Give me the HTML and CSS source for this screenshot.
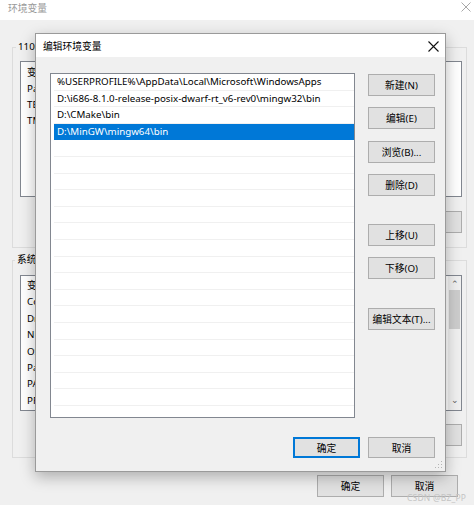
FILE: index.html
```html
<!DOCTYPE html>
<html lang="zh-CN">
<head>
<meta charset="utf-8">
<title>编辑环境变量</title>
<link rel="stylesheet" href="styles.css">
</head>
<body>
<div class="bgwin">
  <div class="bg-title">
    <span class="bg-title-text">环境变量</span>
    <svg class="bg-close" width="10" height="10" viewBox="0 0 10 10"><path d="M0.5 0.5 L9.5 9.5 M9.5 0.5 L0.5 9.5" stroke="#a8a8a8" stroke-width="1" fill="none"/></svg>
  </div>
  <div class="bg-body">
    <div class="group g1">
      <div class="legend">1100</div>
      <div class="bg-list">
        <div class="bg-row">变量</div>
        <div class="bg-row">Path</div>
        <div class="bg-row">TEMP</div>
        <div class="bg-row">TMP</div>
      </div>
      <div class="bg-btns">
        <button class="btn bg-btn">新建(N)...</button>
        <button class="btn bg-btn">编辑(E)...</button>
        <button class="btn bg-btn">删除(D)</button>
      </div>
    </div>
    <div class="group g2">
      <div class="legend">系统</div>
      <div class="bg-list scroll">
        <div class="bg-rows">
          <div class="bg-row">变量</div>
          <div class="bg-row">ComSpec</div>
          <div class="bg-row">DriverData</div>
          <div class="bg-row">NUMBER_OF_PROCESSORS</div>
          <div class="bg-row">OS</div>
          <div class="bg-row">Path</div>
          <div class="bg-row">PATHEXT</div>
          <div class="bg-row">PROCESSOR_ARCHITECTURE</div>
        </div>
        <div class="vscroll">
          <span class="arrow">&#8963;</span>
          <div class="thumb"></div>
          <span class="arrow down">&#8964;</span>
        </div>
      </div>
      <div class="bg-btns">
        <button class="btn bg-btn">新建(W)...</button>
        <button class="btn bg-btn">编辑(I)...</button>
        <button class="btn bg-btn">删除(L)</button>
      </div>
    </div>
    <div class="bg-foot">
      <button class="btn bg-btn">确定</button>
      <button class="btn bg-btn">取消</button>
    </div>
  </div>
</div>

<div class="dialog">
  <div class="dlg-title">
    <span class="dlg-title-text">编辑环境变量</span>
    <svg class="dlg-close" width="11" height="11" viewBox="0 0 11 11"><path d="M0.5 0.5 L10.5 10.5 M10.5 0.5 L0.5 10.5" stroke="#111" stroke-width="1.1" fill="none"/></svg>
  </div>
  <div class="dlg-body">
    <div class="dlg-main">
      <div class="path-list">
        <div class="prow">%USERPROFILE%\AppData\Local\Microsoft\WindowsApps</div>
        <div class="prow">D:\i686-8.1.0-release-posix-dwarf-rt_v6-rev0\mingw32\bin</div>
        <div class="prow">D:\CMake\bin</div>
        <div class="prow sel">D:\MinGW\mingw64\bin</div>
        <div class="prow"></div><div class="prow"></div><div class="prow"></div><div class="prow"></div>
        <div class="prow"></div><div class="prow"></div><div class="prow"></div><div class="prow"></div>
        <div class="prow"></div><div class="prow"></div><div class="prow"></div><div class="prow"></div>
        <div class="prow"></div><div class="prow"></div><div class="prow"></div><div class="prow"></div>
      </div>
      <div class="side-btns">
        <button class="btn side">新建(N)</button>
        <button class="btn side">编辑(E)</button>
        <button class="btn side">浏览(B)...</button>
        <button class="btn side">删除(D)</button>
        <button class="btn side spaced">上移(U)</button>
        <button class="btn side">下移(O)</button>
        <button class="btn side spaced">编辑文本(T)...</button>
      </div>
    </div>
    <div class="dlg-foot">
      <button class="btn foot default">确定</button>
      <button class="btn foot">取消</button>
    </div>
    <svg class="grip" width="8" height="8" viewBox="0 0 8 8">
      <rect x="6" y="0" width="1" height="1" fill="#b4b4b4"/>
      <rect x="3" y="3" width="1" height="1" fill="#b4b4b4"/>
      <rect x="6" y="3" width="1" height="1" fill="#b4b4b4"/>
      <rect x="0" y="6" width="1" height="1" fill="#b4b4b4"/>
      <rect x="3" y="6" width="1" height="1" fill="#b4b4b4"/>
      <rect x="6" y="6" width="1" height="1" fill="#b4b4b4"/>
    </svg>
  </div>
</div>

<div class="watermark">CSDN @BZ_PP</div>
</body>
</html>
```

FILE: styles.css
```css
* { box-sizing: border-box; }
html, body { margin: 0; padding: 0; }
body {
  width: 474px;
  height: 509px;
  overflow: hidden;
  position: relative;
  background: #ffffff;
  font-family: "Noto Sans", "Noto Sans CJK SC", sans-serif;
  font-size: 9.75px;
  color: #000;
}

/* ---------- background window ---------- */
.bgwin {
  width: 474px;
  height: 505px;
  background: #f0f0f0;
  display: flex;
  flex-direction: column;
}
.bg-title {
  height: 20px;
  background: #fff;
  display: flex;
  align-items: center;
  justify-content: space-between;
  padding: 0 3px 4px 8px;
  color: #9a9a9a;
}
.bg-close { display: block; margin-top: -3px; }
.bg-body {
  padding: 0 7px 0 12px;
  display: flex;
  flex-direction: column;
}
.group {
  border: 1px solid #dcdcdc;
  padding: 0 4px 0 7px;
}
.g1 { margin-top: 27px; padding-bottom: 14px; }
.g2 { margin-top: 12px; padding-bottom: 11px; }
.legend {
  margin: -9px 0 0 -4px;
  padding: 0 2px;
  width: max-content;
  white-space: nowrap;
  height: 16px;
  line-height: 16px;
  background: #f0f0f0;
}
.g2 .legend { margin-left: -5px; }
.bg-list {
  background: #fff;
  border: 1px solid #828790;
  height: 136px;
  padding: 3px 0 0 6px;
}
.g1 .bg-list { margin-top: 6px; }
.g2 .bg-list { margin-top: 7px; display: flex; padding: 0 0 0 6px; }
.bg-rows { flex: 1; padding-top: 2px; }
.bg-row { height: 16px; line-height: 16px; white-space: nowrap; }
.g2 .bg-row { height: 16.4px; line-height: 16.4px; }
.vscroll {
  width: 13px;
  background: #f0f0f0;
  display: flex;
  flex-direction: column;
  align-items: center;
  color: #606060;
  font-size: 9px;
}
.arrow { height: 14px; line-height: 16px; }
.arrow.down { margin-top: auto; line-height: 8px; }
.thumb { width: 11px; height: 39px; background: #cdcdcd; }
.bg-btns {
  display: flex;
  justify-content: flex-end;
  gap: 7px;
}
.g1 .bg-btns { margin-top: 14px; }
.g2 .bg-btns { margin-top: 13px; }
.bg-btn { width: 67px; height: 22px; }
.bg-foot {
  margin-top: 17px;
  padding-right: 9px;
  display: flex;
  justify-content: flex-end;
  gap: 7px;
}

/* ---------- buttons ---------- */
.btn {
  font: inherit;
  color: #000;
  background: #e1e1e1;
  border: 1px solid #adadad;
  border-radius: 0;
  padding: 0;
  margin: 0;
  text-align: center;
  white-space: nowrap;
}

/* ---------- dialog ---------- */
.dialog {
  position: absolute;
  left: 35px;
  top: 33px;
  width: 411px;
  height: 439px;
  border: 1px solid #9a9a9a;
  background: #f0f0f0;
  box-shadow: 0 5px 14px rgba(0, 0, 0, 0.28);
  display: flex;
  flex-direction: column;
}
.dlg-title {
  height: 23px;
  background: #fff;
  display: flex;
  align-items: center;
  justify-content: space-between;
  padding: 0 6px 0 7px;
}
.dlg-title-text { margin-top: 1px; }
.dlg-close { display: block; margin-top: 2px; }
.dlg-body {
  flex: 1;
  position: relative;
  padding: 16px 10px 0 14px;
  display: flex;
  flex-direction: column;
}
.dlg-main { display: flex; }
.path-list {
  width: 305px;
  height: 345px;
  background: #fff;
  border: 1px solid #828790;
  overflow: hidden;
}
.prow {
  height: 16.6px;
  line-height: 16px;
  margin-left: 3px;
  padding-left: 3px;
  border-bottom: 1px solid #f0f0f0;
  white-space: nowrap;
}
.prow.sel {
  background: #0078d7;
  color: #fff;
  border-bottom-color: #0078d7;
}
.side-btns {
  margin-left: 13px;
  padding-top: 1px;
  display: flex;
  flex-direction: column;
  gap: 11.3px;
}
.side { width: 67px; height: 22px; }
.side.spaced { margin-top: 17px; }
.dlg-foot {
  margin-top: 19px;
  display: flex;
  justify-content: flex-end;
  gap: 8px;
}
.foot { width: 67px; height: 21px; }
.foot.default {
  border-color: #0078d7;
  box-shadow: inset 0 0 0 1px #0078d7;
}
.grip {
  position: absolute;
  right: 2px;
  bottom: 2px;
}

.watermark {
  position: absolute;
  left: 407px;
  top: 493px;
  height: 10px;
  line-height: 10px;
  font-size: 8.5px;
  color: #c4c4c4;
  letter-spacing: 0.2px;
}
```
